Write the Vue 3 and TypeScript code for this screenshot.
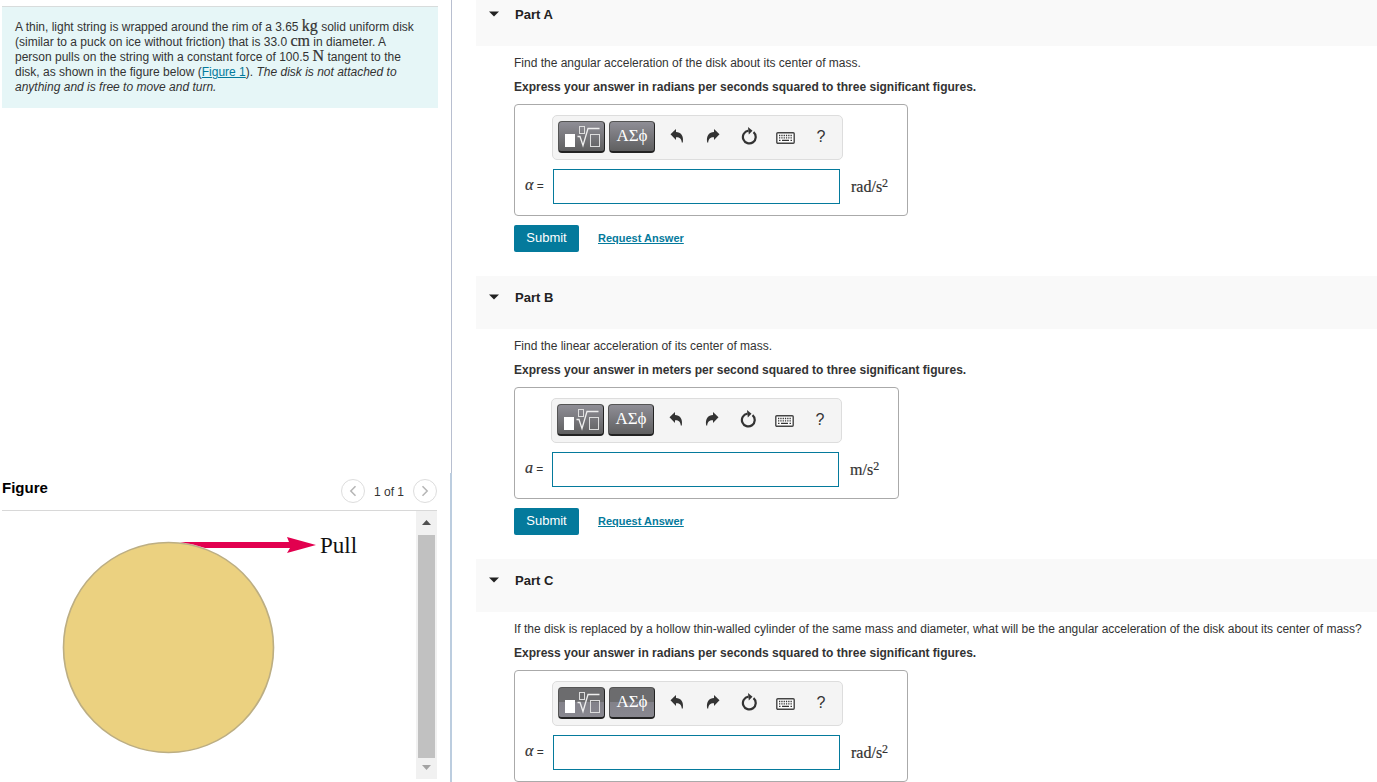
<script setup lang="ts">
interface Part {
  id: string
  title: string
  prompt: string
  instruction: string
  symbol: string
  unit: string
  glossy: boolean
  compact: boolean
}

const parts: Part[] = [
  {
    id: 'a',
    title: 'Part A',
    prompt: 'Find the angular acceleration of the disk about its center of mass.',
    instruction: 'Express your answer in radians per seconds squared to three significant figures.',
    symbol: 'α',
    unit: 'rad/s',
    glossy: false,
    compact: false,
  },
  {
    id: 'b',
    title: 'Part B',
    prompt: 'Find the linear acceleration of its center of mass.',
    instruction: 'Express your answer in meters per second squared to three significant figures.',
    symbol: 'a',
    unit: 'm/s',
    glossy: false,
    compact: true,
  },
  {
    id: 'c',
    title: 'Part C',
    prompt:
      'If the disk is replaced by a hollow thin-walled cylinder of the same mass and diameter, what will be the angular acceleration of the disk about its center of mass?',
    instruction: 'Express your answer in radians per seconds squared to three significant figures.',
    symbol: 'α',
    unit: 'rad/s',
    glossy: true,
    compact: false,
  },
]
</script>

<template>
  <div class="page">
    <aside class="side">
      <div class="side-top">
        <p class="problem">
          A thin, light string is wrapped around the rim of a 3.65 <span class="math">kg</span> solid uniform disk
          (similar to a puck on ice without friction) that is 33.0 <span class="math">cm</span> in diameter. A
          person pulls on the string with a constant force of 100.5 <span class="math">N</span> tangent to the
          disk, as shown in the figure below (<a href="#figure">Figure 1</a>).
          <i>The disk is not attached to anything and is free to move and turn.</i>
        </p>
      </div>
      <section id="figure" class="figure">
        <header class="figure-head">
          <h2>Figure</h2>
          <nav class="pager">
            <button type="button" class="round" aria-label="Previous figure">
              <svg width="8" height="12" viewBox="0 0 8 12"><path d="M6.5 1.2 1.8 6l4.7 4.8" /></svg>
            </button>
            <span>1 of 1</span>
            <button type="button" class="round" aria-label="Next figure">
              <svg width="8" height="12" viewBox="0 0 8 12"><path d="M1.5 1.2 6.2 6l-4.7 4.8" /></svg>
            </button>
          </nav>
        </header>
        <div class="viewer">
          <svg class="drawing" width="320" height="260" viewBox="0 0 320 260" role="img" aria-label="Disk with a pull to the right">
            <circle cx="106.500" cy="136.500" r="105" fill="#ebd180" stroke="#bcae83" stroke-width="1.600" />
            <path d="M118 31H227L225 26 254 34 225 42 228 37H143Q132 33 118 31Z" fill="#e2004f" />
            <text x="258" y="42">Pull</text>
          </svg>
          <div class="scrollbar" aria-hidden="true">
            <svg width="21" height="24" viewBox="0 0 21 24"><path d="M6 14h9l-4.500-5z" fill="#505050" /></svg>
            <div class="thumb"></div>
            <svg width="21" height="21" viewBox="0 0 21 21"><path d="M6 7h9l-4.500 5z" fill="#a3a3a3" /></svg>
          </div>
        </div>
      </section>
    </aside>

    <main class="parts">
      <section v-for="part in parts" :key="part.id" class="part">
        <header class="part-head">
          <svg width="10" height="6" viewBox="0 0 10 6"><path d="M0 0.500h10L5 5.500z" fill="#222" /></svg>
          <h2>{{ part.title }}</h2>
        </header>
        <div class="part-body">
          <p>{{ part.prompt }}</p>
          <p class="instruction">{{ part.instruction }}</p>
          <div class="answer" :class="{ compact: part.compact }">
            <div class="toolbar" role="toolbar" aria-label="Equation tools">
              <button type="button" class="palette" :class="{ glossy: part.glossy }" aria-label="Templates">
                <svg width="37" height="24" viewBox="0 0 37 24">
                  <rect x="2" y="10" width="10" height="13" fill="#fff" />
                  <rect x="16.500" y="2.500" width="5" height="7" fill="none" stroke="#ddd" />
                  <path d="M14.500 12.500H17l3 9L25 4.500H36.500" fill="none" stroke="#eee" stroke-width="1.300" />
                  <rect x="27.500" y="10.500" width="9" height="12" fill="none" stroke="#ddd" />
                </svg>
              </button>
              <button type="button" class="palette greek" :class="{ glossy: part.glossy }">ΑΣϕ</button>
              <button type="button" class="tool" aria-label="Undo">
                <svg width="14" height="14" viewBox="0 0 14 14">
                  <path d="M0.500 5.300 6 0V3C10.800 3.300 14 6.500 12.800 13.500H11.800C11.500 9.500 9.500 8 6 8.200V11Z" fill="#333" />
                </svg>
              </button>
              <button type="button" class="tool" aria-label="Redo">
                <svg width="14" height="14" viewBox="0 0 14 14">
                  <path d="M13.500 5.300 8 0V3C3.200 3.300 0 6.500 1.200 13.500H2.200C2.500 9.500 4.500 8 8 8.200V11Z" fill="#333" />
                </svg>
              </button>
              <button type="button" class="tool" aria-label="Reset">
                <svg width="16" height="18" viewBox="0 0 16 18">
                  <path d="M12.500 5.200A6.400 6.400 0 1 1 7.500 3.700" fill="none" stroke="#333" stroke-width="2.200" />
                  <path d="M7 0 11.500 3.700 7.800 7.500Z" fill="#333" />
                </svg>
              </button>
              <button type="button" class="tool" aria-label="Keyboard shortcuts">
                <svg class="keys" width="19" height="12" viewBox="0 0 19 12">
                  <rect x="0.800" y="0.800" width="17.400" height="10.400" rx="1" fill="#fff" stroke="#444" stroke-width="1.400" />
                  <path d="M3 3.500h13M3 5.800h13" stroke="#333" stroke-width="1.300" stroke-dasharray="1.300 1" />
                  <path d="M3 8.300h1.500M6 8.300h7M14.500 8.300H16" stroke="#333" stroke-width="1.300" />
                </svg>
              </button>
              <button type="button" class="tool help" aria-label="Help">?</button>
            </div>
            <label :for="`answer-${part.id}`"><i class="math">{{ part.symbol }}</i> =</label>
            <input :id="`answer-${part.id}`" type="text" />
            <span class="unit">{{ part.unit }}<sup>2</sup></span>
          </div>
          <div class="actions">
            <button type="button" class="submit">Submit</button>
            <a href="#request">Request Answer</a>
          </div>
        </div>
      </section>
    </main>
  </div>
</template>

<style>
body {
  margin: 0;
}
</style>

<style scoped>
.page {
  display: grid;
  grid-template-columns: 452px minmax(0, 1fr);
  grid-template-rows: minmax(0, 1fr);
  height: 100vh;
  overflow: hidden;
  background: #fff;
  color: #333;
  font: 12px/15px "Liberation Sans", Arial, sans-serif;
}
.page *,
.page {
  box-sizing: border-box;
}
button {
  margin: 0;
  padding: 0;
  border: 0;
  background: none;
  font: inherit;
  color: inherit;
}
h2,
p {
  margin: 0;
}
a {
  color: #047a9c;
}
.math,
.unit {
  font-family: "Liberation Serif", "Times New Roman", serif;
  -webkit-text-stroke: 0.2px #333;
}
.math {
  font-size: 16px;
  line-height: 12px;
}
.unit {
  padding-left: 11px;
  font-size: 16px;
}
.unit sup {
  font-size: 12px;
  line-height: 0;
  vertical-align: 5px;
}
.side {
  display: flex;
  flex-direction: column;
  min-height: 0;
}
.side-top {
  flex: 1;
  padding: 6px 13px 0 2px;
  border-right: 1px solid #b8bfd0;
}
.problem {
  padding: 13px 18px 13px 13px;
  border-top: 1px solid #d8dcdc;
  background: #e6f6f7;
}
.figure {
  height: 309px;
  display: flex;
  flex-direction: column;
  padding: 0 13px 3px 2px;
  border-right: 2px solid #bccddf;
}
.figure-head {
  display: flex;
  justify-content: space-between;
  height: 38px;
  flex: none;
  border-bottom: 1px solid #d8d8d8;
}
.figure-head h2 {
  font-size: 15px;
  line-height: 30px;
  color: #000;
}
.pager {
  display: flex;
  align-items: center;
  gap: 9px;
  height: 36px;
}
.pager span {
  padding-top: 3px;
}
.round {
  display: grid;
  place-items: center;
  width: 24px;
  height: 24px;
  border: 1px solid #ddd;
  border-radius: 50%;
}
.round path {
  fill: none;
  stroke: #b5b5b5;
  stroke-width: 1.5;
}
.viewer {
  flex: 1;
  display: flex;
  justify-content: space-between;
  min-height: 0;
}
.drawing {
  margin-left: 60px;
}
.drawing text {
  font: 23px "Liberation Serif", "Times New Roman", serif;
  fill: #111;
}
.scrollbar {
  display: flex;
  flex-direction: column;
  width: 21px;
  flex: none;
  background: #f1f1f1;
}
.scrollbar svg {
  flex: none;
}
.thumb {
  flex: 1;
  margin: 0 2px;
  background: #c1c1c1;
}
.parts {
  min-width: 0;
  margin-top: -7px;
  padding-left: 24px;
}
.part {
  padding-bottom: 24px;
}
.part-head {
  display: flex;
  align-items: center;
  gap: 16px;
  height: 53px;
  padding: 0 0 11px 13px;
  background: #f9f9f9;
}
.part-head h2 {
  padding-top: 2px;
  font-size: 13px;
  line-height: 16px;
  color: #222;
}
.part-body {
  padding: 9px 0 0 38px;
}
.part-body p {
  line-height: 16px;
  margin-bottom: 8px;
  white-space: nowrap;
}
.part-body .instruction {
  margin-bottom: 9px;
  font-weight: bold;
}
.answer {
  display: inline-grid;
  grid-template-columns: 28px 287px auto;
  align-items: center;
  align-content: start;
  height: 112px;
  padding: 10px 19px 10px 10px;
  border: 1px solid #aaa;
  border-radius: 4px;
  vertical-align: top;
}
.answer.compact {
  grid-template-columns: 27px 287px auto;
}
.toolbar {
  grid-column: 2 / 4;
  justify-self: start;
  display: flex;
  align-items: center;
  width: 291px;
  height: 45px;
  margin: 0 0 9px -1px;
  padding: 0 5px 2px;
  border: 1px solid #ddd;
  border-radius: 5px;
  background: #f4f4f4;
}
.palette {
  display: grid;
  place-items: center;
  flex: none;
  width: 47px;
  height: 32px;
  margin-right: 4px;
  padding-bottom: 1px;
  border: 1px solid #555;
  border-right-color: #222;
  border-bottom: 2px solid #222;
  border-radius: 4px;
  background: linear-gradient(#8f8e96, #5f5f60);
  color: #fff;
}
.palette.glossy {
  background: linear-gradient(#6c6c6e 0, #6c6c6e 50%, #83828a 50%, #88878f 100%);
}
.greek {
  width: 46px;
  font: 17px/26px "Liberation Serif", serif;
}
.tool {
  display: grid;
  place-items: center;
  flex: none;
  width: 36px;
  height: 32px;
  padding-bottom: 1px;
}
.keys {
  margin-top: 4px;
}
.help {
  font-size: 16px;
  color: #333;
}
label {
  white-space: nowrap;
}
input {
  width: 100%;
  height: 35px;
  padding: 0 6px;
  border: 1px solid #047a9c;
  border-radius: 0;
  background: #fff;
  font: inherit;
  outline: 0;
}
.actions {
  display: flex;
  align-items: center;
  gap: 19px;
  margin-top: 9px;
}
.submit {
  width: 65px;
  height: 27px;
  border-radius: 2px;
  background: #047a9c;
  color: #fff;
  font-size: 13px;
  padding-bottom: 2px;
}
.actions a {
  font-size: 11px;
  font-weight: bold;
}
</style>
